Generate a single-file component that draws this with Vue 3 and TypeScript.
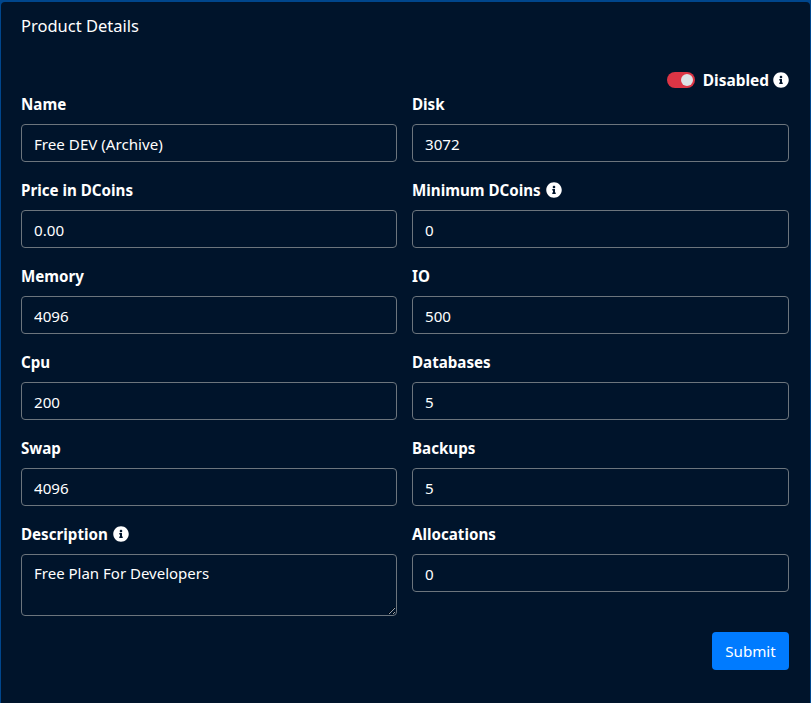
<script setup lang="ts">
interface Field {
  label: string;
  value: string;
  info?: boolean;
  multiline?: boolean;
}

const fields: Field[] = [
  { label: "Name", value: "Free DEV (Archive)" },
  { label: "Disk", value: "3072" },
  { label: "Price in DCoins", value: "0.00" },
  { label: "Minimum DCoins", value: "0", info: true },
  { label: "Memory", value: "4096" },
  { label: "IO", value: "500" },
  { label: "Cpu", value: "200" },
  { label: "Databases", value: "5" },
  { label: "Swap", value: "4096" },
  { label: "Backups", value: "5" },
  { label: "Description", value: "Free Plan For Developers", info: true, multiline: true },
  { label: "Allocations", value: "0" },
];

const infoPath =
  "M256 8C119.043 8 8 119.083 8 256c0 136.997 111.043 248 248 248s248-111.003 248-248C504 119.083 392.957 8 256 8zm0 110c23.196 0 42 18.804 42 42s-18.804 42-42 42-42-18.804-42-42 18.804-42 42-42zm56 254c0 6.627-5.373 12-12 12h-88c-6.627 0-12-5.373-12-12v-24c0-6.627 5.373-12 12-12h12v-64h-12c-6.627 0-12-5.373-12-12v-24c0-6.627 5.373-12 12-12h64c6.627 0 12 5.373 12 12v100h12c6.627 0 12 5.373 12 12v24z";
</script>

<template>
  <main class="page">
    <section class="card">
      <header class="card-header">
        <h1 class="card-title">Product Details</h1>
      </header>
      <form class="card-body" @submit.prevent>
        <div class="status">
          <span class="switch"><span class="thumb"></span></span>
          <span class="status-label">Disabled</span>
          <svg class="info" viewBox="0 0 512 512" aria-hidden="true"><path :d="infoPath" /></svg>
        </div>
        <div class="grid">
          <div v-for="f in fields" :key="f.label" class="group">
            <label class="label">
              <span>{{ f.label }}</span>
              <svg v-if="f.info" class="info" viewBox="0 0 512 512" aria-hidden="true"><path :d="infoPath" /></svg>
            </label>
            <textarea v-if="f.multiline" class="control area" :value="f.value"></textarea>
            <input v-else class="control" type="text" :value="f.value" />
          </div>
        </div>
        <div class="actions">
          <button class="submit" type="submit">Submit</button>
        </div>
      </form>
    </section>
  </main>
</template>

<style>
html, body { margin: 0; background: #00142b; }
</style>

<style scoped>
.page {
  width: 811px;
  height: 703px;
  box-sizing: border-box;
  overflow: hidden;
  background: #00468c;
  padding: 2px 1px 0 1px;
  font-family: "Noto Sans", "Open Sans", sans-serif;
  font-size: 15.15px;
  color: #fff;
}
.card {
  height: 703px;
  background: #00142b;
  border-radius: 4px 4px 0 0;
}
.card-header { padding: 14px 20px 0; height: 52px; box-sizing: border-box; }
.card-title { margin: 0; font-size: 16.5px; font-weight: 400; line-height: 20px; }
.card-body { padding: 14px 21px 0 20px; }
.status {
  height: 24px;
  display: flex;
  align-items: center;
  justify-content: flex-end;
  gap: 4px;
  font-size: 15.45px;
  font-weight: 700;
}
.switch {
  width: 28px;
  height: 16px;
  margin-right: 4px;
  border-radius: 8px;
  background: #dc3545;
  display: flex;
  align-items: center;
  justify-content: flex-end;
  padding-right: 2px;
  box-sizing: border-box;
}
.thumb { width: 12px; height: 12px; border-radius: 50%; background: #dee2e6; }
.info { width: 16px; height: 16px; fill: #fff; flex: none; }
.grid {
  display: grid;
  grid-template-columns: 376px 377px;
  column-gap: 15px;
  align-items: start;
}
.group { margin-bottom: 16px; }
.label {
  display: flex;
  align-items: center;
  gap: 5px;
  height: 24px;
  margin-bottom: 8px;
  font-weight: 700;
}
.control {
  display: block;
  width: 100%;
  height: 38px;
  box-sizing: border-box;
  padding: 7px 12px 5px;
  border: 1px solid #6c757d;
  border-radius: 4px;
  background: transparent;
  color: #fff;
  font: inherit;
  line-height: 24px;
  outline: none;
}
.area { height: 62px; padding: 6px 12px; font-size: 15px; resize: vertical; }
.actions { display: flex; justify-content: flex-end; }
.submit {
  width: 77px;
  height: 38px;
  border: none;
  border-radius: 4px;
  background: #007bff;
  color: #fff;
  font: inherit;
  padding: 0;
}
</style>
